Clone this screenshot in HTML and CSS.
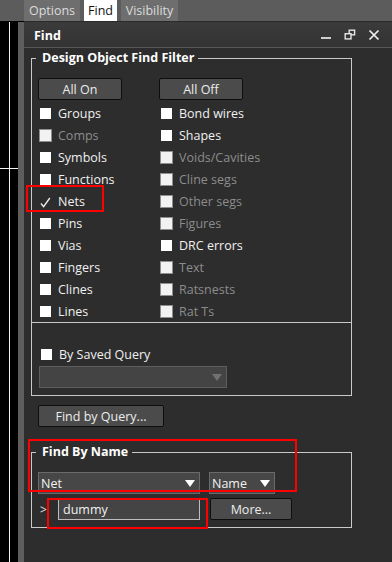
FILE: index.html
```html
<!DOCTYPE html>
<html lang="en">
<head>
    <meta charset="UTF-8">
    <meta name="viewport" content="width=device-width, initial-scale=1.0">
    <title>Find</title>
    <link rel="stylesheet" href="styles.css">
</head>
<body>

    <div class="tabbar">
        <span class="tab options">Options</span>
        <span class="tab active">Find</span>
        <span class="tab visibility">Visibility</span>
    </div>

    <div class="main">
        <div class="gutter">
            <div class="canvas"><span class="hline"></span></div>
            <div class="strip"></div>
        </div>

        <div class="panel">
            <div class="panel-head">
                <span class="title">Find</span>
                <div class="win-btns">
                    <svg width="12" height="12" viewBox="0 0 12 12"><rect x="1" y="8" width="10" height="2" fill="#cfcfcf"/></svg>
                    <svg width="12" height="12" viewBox="0 0 12 12" fill="none" stroke="#e6e6e6" stroke-width="1.4">
                        <rect x="5.2" y="1.2" width="5.4" height="4.6"/>
                        <rect x="1.2" y="4.7" width="5.8" height="5.2" fill="#363636"/>
                    </svg>
                    <svg width="12" height="12" viewBox="0 0 12 12" stroke="#f0f0f0" stroke-width="1.7"><path d="M1.5 1.5 L10.5 10.5 M10.5 1.5 L1.5 10.5"/></svg>
                </div>
            </div>

            <div class="panel-body">
                <fieldset class="group">
                    <legend>Design Object Find Filter</legend>
                    <div class="filter-grid">
                        <button class="btn">All On</button>
                        <button class="btn">All Off</button>

                        <div class="check"><span class="box"></span>Groups</div>
                        <div class="check"><span class="box"></span>Bond wires</div>
                        <div class="check off"><span class="box"></span>Comps</div>
                        <div class="check"><span class="box"></span>Shapes</div>
                        <div class="check"><span class="box"></span>Symbols</div>
                        <div class="check off"><span class="box"></span>Voids/Cavities</div>
                        <div class="check"><span class="box"></span>Functions</div>
                        <div class="check off"><span class="box"></span>Cline segs</div>
                        <div class="check checked">
                            <svg class="tick" width="11" height="11" viewBox="0 0 11 11" fill="none" stroke="#f2f2f2" stroke-width="1.3"><path d="M1 6.5 L3.6 9.6 L9.8 1"/></svg>Nets
                        </div>
                        <div class="check off"><span class="box"></span>Other segs</div>
                        <div class="check"><span class="box"></span>Pins</div>
                        <div class="check off"><span class="box"></span>Figures</div>
                        <div class="check"><span class="box"></span>Vias</div>
                        <div class="check"><span class="box"></span>DRC errors</div>
                        <div class="check"><span class="box"></span>Fingers</div>
                        <div class="check off"><span class="box"></span>Text</div>
                        <div class="check"><span class="box"></span>Clines</div>
                        <div class="check off"><span class="box"></span>Ratsnests</div>
                        <div class="check"><span class="box"></span>Lines</div>
                        <div class="check off"><span class="box"></span>Rat Ts</div>
                    </div>

                    <div class="saved">
                        <div class="check"><span class="box"></span>By Saved Query</div>
                        <div class="select disabled"><span class="caret"></span></div>
                    </div>
                </fieldset>

                <button class="btn query">Find by Query...</button>

                <fieldset class="group byname">
                    <legend>Find By Name</legend>
                    <div class="name-row">
                        <div class="select net">Net<span class="caret"></span></div>
                        <div class="select kind">Name<span class="caret"></span></div>
                    </div>
                    <div class="name-row">
                        <span class="prompt">&gt;</span>
                        <div class="input">dummy</div>
                        <button class="btn more">More...</button>
                    </div>
                </fieldset>
            </div>
        </div>
    </div>

    <!-- red annotation boxes -->
    <div class="mark mark-nets"></div>
    <div class="mark mark-type"></div>
    <div class="mark mark-input"></div>

</body>
</html>
```

FILE: styles.css
```css
body {
    margin: 0;
    width: 392px;
    height: 562px;
    overflow: hidden;
    background: #2d2d2d;
    color: #f0f0f0;
    font-family: "Open Sans", "Noto Sans", sans-serif;
    font-size: 12px;
    position: relative;
}

.tabbar {
    height: 21px;
    background: #5c5c5c;
    padding-left: 24px;
    display: flex;
    gap: 4px;
}

.tab {
    height: 22px;
    line-height: 22px;
    text-align: center;
    background: #6e6e6e;
    color: #dcdcdc;
    font-size: 12.5px;
}

.tab.options {
    width: 56px;
}

.tab.visibility {
    width: 57px;
}

.tab.active {
    width: 33px;
    background: #ffffff;
    color: #111;
}

.main {
    display: flex;
    height: 541px;
}

.gutter {
    width: 24px;
    display: flex;
    background: #000;
}

.canvas {
    width: 18px;
    position: relative;
}

.canvas::before {
    content: "";
    position: absolute;
    left: 9px;
    top: 1px;
    bottom: 0;
    width: 1px;
    background: #f2f2f2;
}

.hline {
    position: absolute;
    left: 0;
    top: 147px;
    width: 18px;
    height: 1px;
    background: #f2f2f2;
}

.strip {
    width: 6px;
    background: #5e5e5e;
    margin-top: 1px;
}

.panel {
    flex: 1;
    background: #2d2d2d;
}

.panel-head {
    height: 25px;
    box-sizing: content-box;
    border-top: 1px solid #2a2a2a;
    border-bottom: 1px solid #585858;
    background: linear-gradient(#3b3b3b, #333333);
    display: flex;
    align-items: center;
    justify-content: space-between;
    padding: 0 12px 0 10px;
}

.title {
    font-weight: bold;
    font-size: 12.5px;
    color: #fff;
    padding-top: 2px;
}

.win-btns {
    display: flex;
    gap: 12px;
    align-items: center;
}

.win-btns svg {
    display: block;
}

.panel-body {
    padding: 1px 0 0 7px;
}

.group {
    margin: 0;
    width: 321px;
    box-sizing: border-box;
    border: 1px solid #c9c9c9;
    padding: 0 6px;
}

.group legend {
    margin-left: -2px;
    padding: 0 4px 0 6px;
    line-height: 18px;
    font-weight: bold;
    font-size: 12.5px;
    color: #fff;
}

.filter-grid {
    margin-top: 11px;
    display: grid;
    grid-template-columns: 121px 121px;
}

.btn {
    height: 22px;
    background: #4b4b4b;
    border: 1px solid #0e0e0e;
    border-radius: 2px;
    color: #ececec;
    font-family: inherit;
    font-size: 12.5px;
    padding: 0;
    box-sizing: border-box;
}

.filter-grid .btn {
    width: 84px;
    margin-bottom: 2px;
}

.check {
    height: 22px;
    display: flex;
    align-items: center;
    color: #f0f0f0;
    font-size: 12.5px;
    padding-top: 1px;
    box-sizing: border-box;
}

.box {
    width: 11px;
    height: 11px;
    background: #fff;
    margin: 0 7px 0 2px;
}

.check.off {
    color: #8c8c8c;
}

.check.off .box {
    border: 1px solid #8e8e8e;
    background: #f2f2f2;
    margin: 0 6px 0 1px;
}

.tick {
    margin: 1px 7px 0 2px;
}

.saved {
    margin: 0 -6px;
    border-top: 1px solid #c9c9c9;
    padding: 20px 7px 7px;
}

.saved .box {
    margin-left: 2px;
}

.select {
    height: 22px;
    box-sizing: border-box;
    background: #474747;
    border: 1px solid #6a6a6a;
    display: flex;
    align-items: center;
    justify-content: space-between;
    padding: 0 4px 0 2px;
    color: #f2f2f2;
    font-size: 12.5px;
}

.select.disabled {
    width: 188px;
    margin-top: 1px;
    background: #444;
    border-color: #5d5d5d;
    justify-content: flex-end;
}

.caret {
    width: 0;
    height: 0;
    border-left: 5px solid transparent;
    border-right: 5px solid transparent;
    border-top: 7px solid #fff;
}

.select.disabled .caret {
    border-top-color: #707070;
}

.query {
    width: 126px;
    margin: 9px 0 0 7px;
    display: block;
}

.byname {
    margin-top: 16px;
    padding-bottom: 7px;
}

.name-row {
    display: flex;
    align-items: center;
}

.name-row:first-of-type {
    margin-top: 11px;
}

.select.net {
    width: 162px;
}

.select.kind {
    width: 66px;
    margin-left: 9px;
}

.name-row + .name-row {
    margin-top: 4px;
}

.prompt {
    width: 20px;
    padding-left: 2px;
    box-sizing: border-box;
    color: #e0e0e0;
}

.input {
    width: 142px;
    height: 21px;
    box-sizing: border-box;
    background: #444;
    border: 1px solid #bdbdbd;
    padding-left: 4px;
    line-height: 19px;
    font-size: 12.5px;
    color: #f2f2f2;
}

.more {
    width: 82px;
    margin-left: 10px;
}

.mark {
    position: absolute;
    border: 2px solid #ff0000;
    box-sizing: border-box;
}

.mark-nets {
    left: 26px;
    top: 185px;
    width: 78px;
    height: 27px;
}

.mark-type {
    left: 28px;
    top: 439px;
    width: 269px;
    height: 53px;
}

.mark-input {
    left: 47px;
    top: 498px;
    width: 161px;
    height: 31px;
}
```
